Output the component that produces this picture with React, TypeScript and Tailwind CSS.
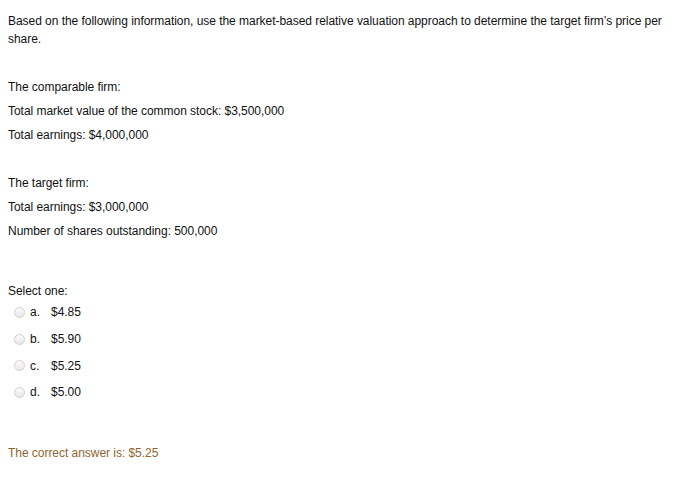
import React from 'react';

const options = [
  { letter: 'a.', text: '$4.85' },
  { letter: 'b.', text: '$5.90' },
  { letter: 'c.', text: '$5.25' },
  { letter: 'd.', text: '$5.00' },
];

export default function App() {
  return (
    <div className="min-h-screen bg-white text-[12px] tracking-[-0.04px] text-[#111]" style={{ fontFamily: '"Liberation Sans", Arial, sans-serif' }}>
      <div className="px-2 pt-3">
        <div className="[&_p]:leading-[18px] [&_p]:mb-[6px]">
          <p>Based on the following information, use the market-based relative valuation approach to determine the target firm’s price per share.</p>
          <p>&nbsp;</p>
          <p>The comparable firm:</p>
          <p>Total market value of the common stock: $3,500,000</p>
          <p>Total earnings: $4,000,000</p>
          <p>&nbsp;</p>
          <p>The target firm:</p>
          <p>Total earnings: $3,000,000</p>
          <p>Number of shares outstanding: 500,000</p>
        </div>

        <div className="mt-[42px]">
          <div className="leading-[18px] -mb-[1px]">Select one:</div>
          <div className="flex flex-col">
            {options.map((o) => (
              <label key={o.letter} className="flex items-center h-[26.7px]">
                <span className="ml-[6px] w-[11px] h-[11px] rounded-full border border-[#cfcfcf] bg-gradient-to-b from-[#fafafa] to-[#e8e8e8]" />
                <span className="ml-[5px] w-[21px]">{o.letter}</span>
                <span>{o.text}</span>
              </label>
            ))}
          </div>
        </div>

        <div className="mt-[38px] leading-[18px] text-[#8e662e]">The correct answer is: $5.25</div>
      </div>
    </div>
  );
}
